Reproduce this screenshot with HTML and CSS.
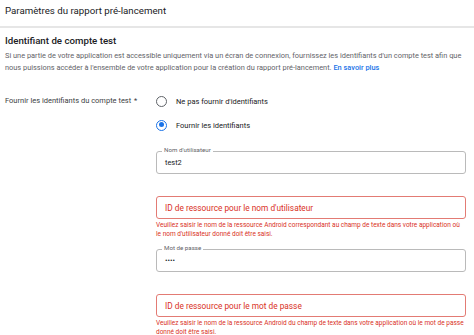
FILE: index.html
```html
<!DOCTYPE html>
<html lang="fr">
<head>
<meta charset="utf-8">
<link rel="stylesheet" href="styles.css">
</head>
<body>
<div class="page">
  <div class="title">Paramètres du rapport pré-lancement</div>
  <div class="section">
    <div class="heading">Identifiant de compte test</div>
    <p class="para">Si une partie de votre application est accessible uniquement via un écran de connexion, fournissez les identifiants d'un compte test afin que nous puissions accéder à l'ensemble de votre application pour la création du rapport pré-lancement. <a class="link" href="#">En savoir plus</a></p>
    <div class="row">
      <div class="row-label">Fournir les identifiants du compte test <span class="req">*</span></div>
      <div class="controls">
        <div class="radio"><span class="circle"></span><span class="radio-text">Ne pas fournir d'identifiants</span></div>
        <div class="radio"><span class="circle checked"></span><span class="radio-text">Fournir les identifiants</span></div>
        <div class="field first">
          <span class="float-label">Nom d'utilisateur</span>
          <span class="value">test2</span>
        </div>
        <div class="field error">
          <span class="err-value">ID de ressource pour le nom d'utilisateur</span>
        </div>
        <div class="helper">Veuillez saisir le nom de la ressource Android correspondant au champ de texte dans votre application où<br>le nom d'utilisateur donné doit être saisi.</div>
        <div class="field pw">
          <span class="float-label">Mot de passe</span>
          <span class="value dots">••••</span>
        </div>
        <div class="field error">
          <span class="err-value">ID de ressource pour le mot de passe</span>
        </div>
        <div class="helper">Veuillez saisir le nom de la ressource Android du champ de texte dans votre application où le mot de passe<br>donné doit être saisi.</div>
      </div>
    </div>
  </div>
</div>
</body>
</html>
```

FILE: styles.css
```css
html, body {
  margin: 0;
  padding: 0;
  background: #ffffff;
}
body {
  font-family: Roboto, "Liberation Sans", Arial, sans-serif;
  color: #3c4043;
  width: 474px;
  height: 335px;
  overflow: hidden;
}
.title {
  font-size: 9.7px;
  font-weight: 400;
  line-height: 14px;
  color: #202124;
  padding: 4px 0 8px 5px;
  border-bottom: 2px solid #e6e6e6;
}
.section {
  padding-left: 5px;
}
.heading {
  margin-top: 6px;
  font-size: 9.7px;
  font-weight: 500;
  line-height: 14px;
  color: #202124;
}
.para {
  margin: 2px 0 0 0;
  width: 462px;
  font-size: 7.4px;
  line-height: 12px;
  color: #5f6368;
}
.link {
  color: #1a73e8;
  text-decoration: none;
  font-weight: 500;
}
.row {
  display: flex;
  margin-top: 19px;
}
.row-label {
  width: 151px;
  font-size: 7.5px;
  line-height: 16px;
  color: #3c4043;
}
.req {
  margin-left: 1px;
}
.controls {
  width: 310px;
  display: flex;
  flex-direction: column;
}
.radio {
  display: flex;
  align-items: center;
  height: 16px;
  margin-bottom: 8px;
}
.circle {
  box-sizing: border-box;
  width: 11px;
  height: 11px;
  border: 1.2px solid #5f6368;
  border-radius: 50%;
  position: relative;
  flex: none;
}
.circle.checked {
  border-color: #1a73e8;
}
.circle.checked::after {
  content: "";
  position: absolute;
  left: 1.8px;
  top: 1.8px;
  width: 5px;
  height: 5px;
  border-radius: 50%;
  background: #1a73e8;
}
.radio-text {
  margin-left: 9px;
  font-size: 7.5px;
  color: #202124;
}
.field {
  box-sizing: border-box;
  position: relative;
  height: 23px;
  border: 1px solid #bababa;
  border-radius: 3px;
  display: flex;
  align-items: center;
  padding-left: 8px;
}
.field.first {
  margin-top: 10px;
}
.field.error {
  margin-top: 22px;
  border-color: #e37b74;
}
.field.pw {
  margin-top: 11px;
}
.float-label {
  position: absolute;
  left: 5px;
  top: -5px;
  background: #ffffff;
  padding: 0 2px;
  font-size: 6.2px;
  line-height: 7px;
  color: #5f6368;
}
.value {
  font-size: 7.4px;
  color: #202124;
}
.dots {
  font-size: 7.4px;
}
.err-value {
  font-size: 8.3px;
  color: #d93025;
}
.helper {
  margin-top: 2px;
  font-size: 6.5px;
  line-height: 8.5px;
  white-space: nowrap;
  color: #d93025;
}
```
